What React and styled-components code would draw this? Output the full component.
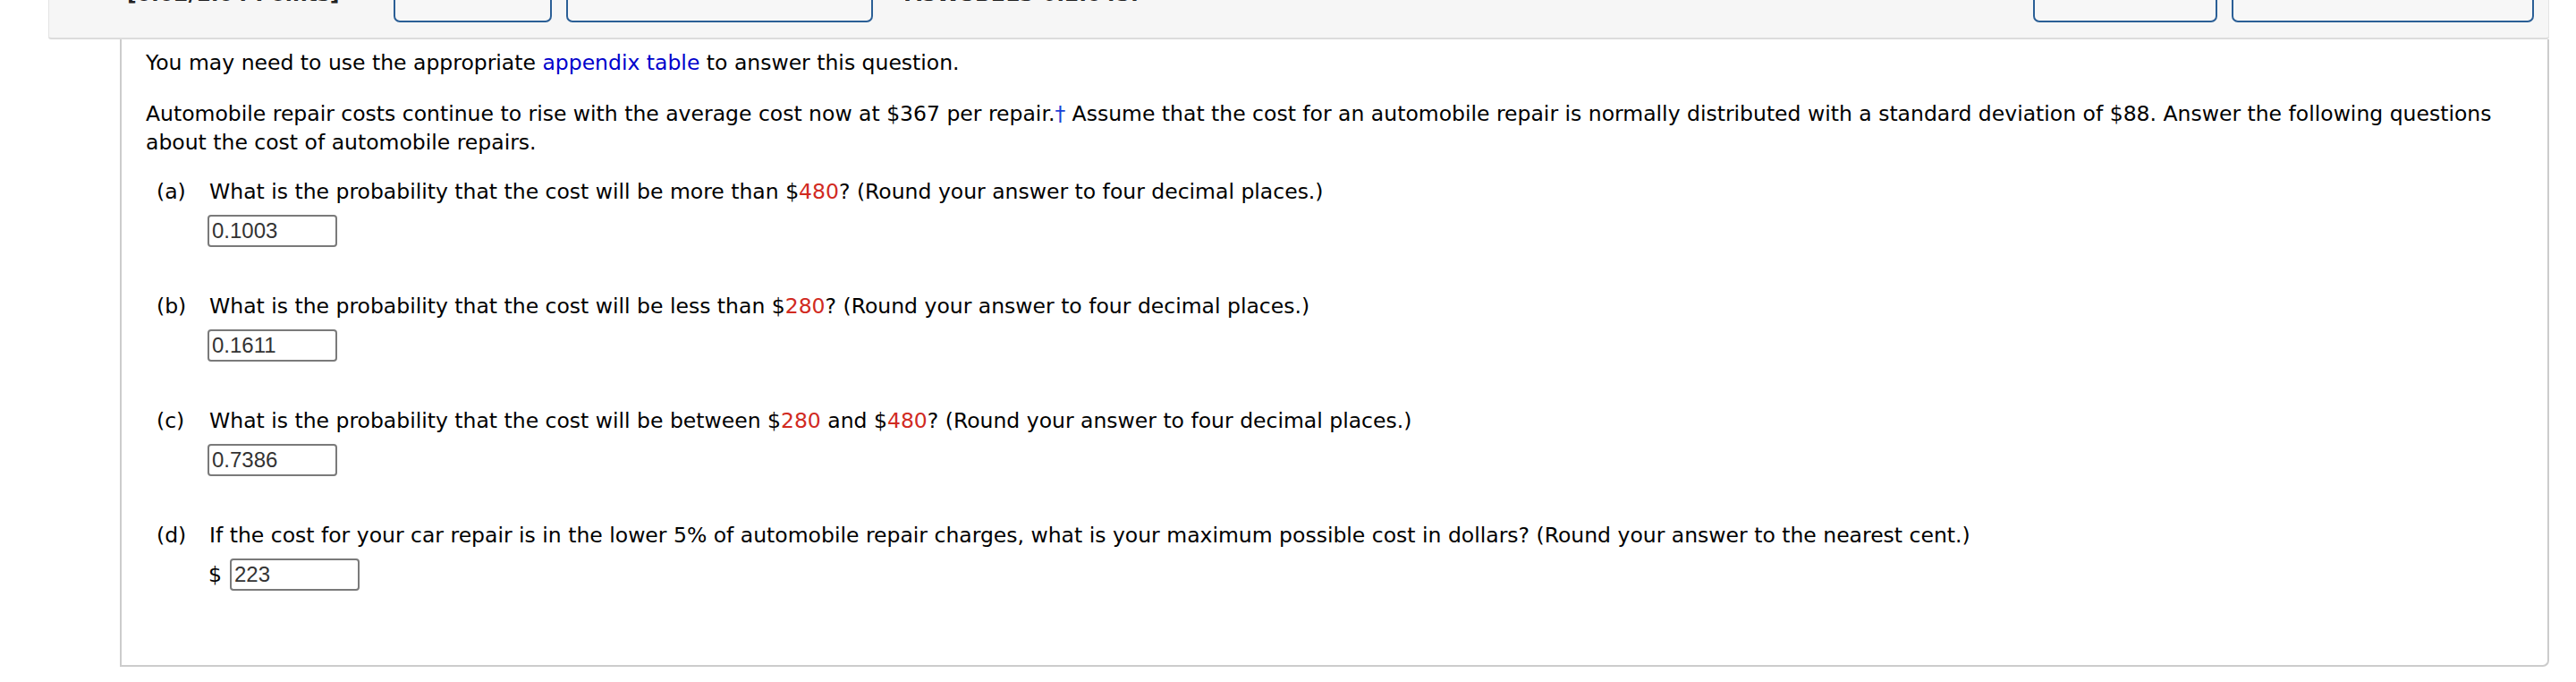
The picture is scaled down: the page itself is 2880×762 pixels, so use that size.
import React from 'react';
import styled, { createGlobalStyle } from 'styled-components';

const Global = createGlobalStyle`
  html, body { margin: 0; padding: 0; background: #ffffff; }
  body {
    font-family: "DejaVu Sans", Verdana, sans-serif;
    color: #000000;
    overflow: hidden;
  }
`;

const Page = styled.div`
  padding-left: 54px;
  width: 2796px;
`;

const Header = styled.header`
  margin-top: -40px;
  height: 82px;
  background: #f6f6f6;
  border-bottom: 2px solid #dcdcdc;
  border-radius: 0 0 3px 3px;
  box-shadow: inset 1px 0 0 #e4e4e4, inset -1px 0 0 #e4e4e4;
  display: flex;
  align-items: flex-start;
`;

const Title = styled.div`
  flex: 0 0 ${p => p.$w}px;
  margin-left: ${p => p.$ml}px;
  margin-top: 17px;
  font-size: 23.5px;
  line-height: 32px;
  font-weight: bold;
  color: #222;
  white-space: nowrap;
  overflow: hidden;
`;

const ButtonGroup = styled.div`
  display: flex;
  gap: 16px;
  margin-left: ${p => p.$ml || 0}px;
  margin-right: ${p => p.$mr || 0}px;
`;

const HeadButton = styled.div`
  width: ${p => p.$w}px;
  height: 60px;
  margin-top: 5px;
  box-sizing: border-box;
  border: 2px solid #2b5f96;
  border-radius: 0 0 7px 7px;
  background: #f7f7f7;
`;

const Spacer = styled.div`
  flex: 1;
`;

const Panel = styled.main`
  margin-left: 80px;
  height: 701px;
  box-sizing: border-box;
  border: 2px solid #cccccc;
  border-top: none;
  border-radius: 0 0 7px 0;
  padding: 10px 10px 0 27px;
  font-size: 23.5px;
  line-height: 32px;
`;

const Para = styled.p`
  margin: 0 0 ${p => p.$mb}px 0;
`;

const Link = styled.span`
  color: #0000cc;
`;

const Dagger = styled.span`
  color: #1a3fd6;
`;

const Red = styled.span`
  color: #d12a1f;
`;

const Part = styled.div`
  display: grid;
  grid-template-columns: 59px 1fr;
  row-gap: 10px;
  padding-left: 12px;
  margin-bottom: 50px;
`;

const Label = styled.span``;

const Question = styled.span``;

const AnswerRow = styled.div`
  grid-column: 2;
  display: flex;
  align-items: center;
  height: 36px;
  margin-left: ${p => p.$ml || 0}px;
`;

const Currency = styled.span`
  margin-right: 9px;
`;

const Answer = styled.input`
  width: 145px;
  height: 36px;
  box-sizing: border-box;
  border: 2px solid #7a7a7a;
  border-radius: 4px;
  padding: 0 0 0 3px;
  margin: 0;
  background: #fff;
  font-family: "Liberation Sans", Arial, sans-serif;
  font-size: 24px;
  color: #333333;
  outline: none;
`;

const parts = [
  {
    label: '(a)',
    q: <>What is the probability that the cost will be more than $<Red>480</Red>? (Round your answer to four decimal places.)</>,
    a: '0.1003',
  },
  {
    label: '(b)',
    q: <>What is the probability that the cost will be less than $<Red>280</Red>? (Round your answer to four decimal places.)</>,
    a: '0.1611',
  },
  {
    label: '(c)',
    q: <>What is the probability that the cost will be between $<Red>280</Red> and $<Red>480</Red>? (Round your answer to four decimal places.)</>,
    a: '0.7386',
  },
  {
    label: '(d)',
    q: <>If the cost for your car repair is in the lower 5% of automobile repair charges, what is your maximum possible cost in dollars? (Round your answer to the nearest cent.)</>,
    a: '223',
    dollar: true,
  },
];

export default function App() {
  return (
    <>
      <Global />
      <Page>
        <Header>
          <Title $ml={88} $w={298}>[0.02/1.04 Points]</Title>
          <ButtonGroup>
            <HeadButton $w={177} />
            <HeadButton $w={343} />
          </ButtonGroup>
          <Title $ml={36} $w={600}>ASWSBE13 6.E.045.</Title>
          <Spacer />
          <ButtonGroup $mr={17}>
            <HeadButton $w={206} />
            <HeadButton $w={338} />
          </ButtonGroup>
        </Header>
        <Panel>
          <Para $mb={25}>
            You may need to use the appropriate <Link>appendix table</Link> to answer this question.
          </Para>
          <Para $mb={23}>
            Automobile repair costs continue to rise with the average cost now at $367 per repair.<Dagger>†</Dagger> Assume that the cost for an automobile repair is normally distributed with a standard deviation of $88. Answer the following questions about the cost of automobile repairs.
          </Para>
          {parts.map(p => (
            <Part key={p.label}>
              <Label>{p.label}</Label>
              <Question>{p.q}</Question>
              <AnswerRow $ml={p.dollar ? -1 : -2}>
                {p.dollar && <Currency>$</Currency>}
                <Answer readOnly value={p.a} />
              </AnswerRow>
            </Part>
          ))}
        </Panel>
      </Page>
    </>
  );
}
